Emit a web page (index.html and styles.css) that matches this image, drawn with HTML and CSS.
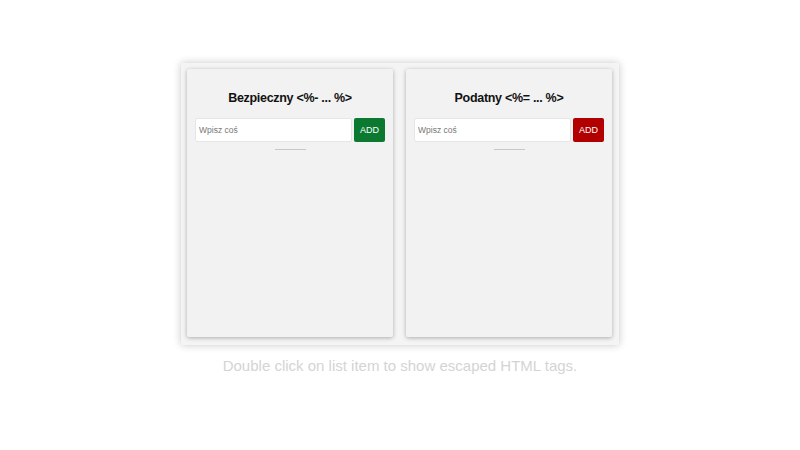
FILE: index.html
```html
<!DOCTYPE html>
<html>
<head>
<meta charset="utf-8">
<link rel="stylesheet" href="styles.css">
</head>
<body>
<div class="page">
  <div class="board">
    <div class="panel">
      <h2 class="title">Bezpieczny &lt;%- ... %&gt;</h2>
      <div class="form">
        <input class="field" type="text" placeholder="Wpisz coś">
        <button class="btn btn-safe">ADD</button>
      </div>
      <div class="divider"></div>
    </div>
    <div class="panel">
      <h2 class="title">Podatny &lt;%= ... %&gt;</h2>
      <div class="form">
        <input class="field" type="text" placeholder="Wpisz coś">
        <button class="btn btn-vuln">ADD</button>
      </div>
      <div class="divider"></div>
    </div>
  </div>
  <p class="hint">Double click on list item to show escaped HTML tags.</p>
</div>
</body>
</html>
```
FILE: styles.css
```css
html, body {
  margin: 0;
  padding: 0;
  background: #ffffff;
  font-family: "Liberation Sans", Arial, sans-serif;
}
.page {
  display: flex;
  flex-direction: column;
  align-items: center;
  padding-top: 63px;
}
.board {
  display: flex;
  gap: 13px;
  width: 438px;
  height: 282px;
  box-sizing: border-box;
  padding: 6px 7px 8px 6px;
  background: #f4f4f4;
  box-shadow: 0 0 8px rgba(0,0,0,0.22);
}
.panel {
  width: 206px;
  height: 268px;
  box-sizing: border-box;
  padding: 0 8px;
  background: #f2f2f2;
  border-radius: 2px;
  box-shadow: 0 1px 4px rgba(0,0,0,0.3);
  display: flex;
  flex-direction: column;
  align-items: center;
}
.title {
  margin: 21px 0 0;
  font-size: 12.5px;
  letter-spacing: -0.3px;
  font-weight: bold;
  color: #111;
  line-height: 16px;
  height: 16px;
}
.form {
  display: flex;
  gap: 2px;
  width: 100%;
  margin-top: 12px;
}
.field {
  flex: 1;
  min-width: 0;
  height: 24px;
  box-sizing: border-box;
  border: 1px solid #e6e6e6;
  border-radius: 2px;
  background: #fff;
  padding: 0 3px;
  font-family: "Liberation Sans", Arial, sans-serif;
  font-size: 8.5px;
  outline: none;
}
.field::placeholder {
  color: #777;
}
.btn {
  width: 31px;
  height: 24px;
  border: none;
  border-radius: 2px;
  color: #fff;
  font-family: "Liberation Sans", Arial, sans-serif;
  font-size: 9px;
  padding: 0;
}
.btn-safe {
  background: #0b7a30;
}
.btn-vuln {
  background: #b20000;
}
.divider {
  width: 31px;
  height: 1px;
  background: #c8c8c8;
  margin-top: 7px;
}
.hint {
  margin: 11px 0 0;
  font-size: 15px;
  line-height: 19px;
  color: #d4d4d4;
}
```
